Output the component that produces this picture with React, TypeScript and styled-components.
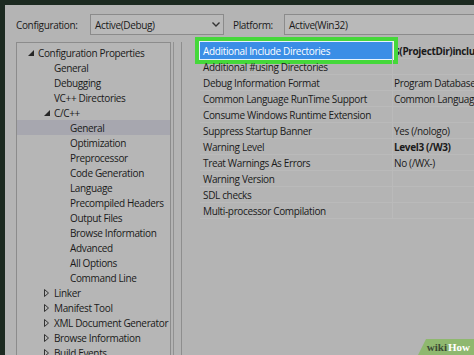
import React from "react";
import styled, { createGlobalStyle } from "styled-components";

const GlobalStyle = createGlobalStyle`
  body {
    margin: 0;
    font-family: "Open Sans", "Noto Sans", sans-serif;
  }
`;

interface TreeItem {
  label: string;
  level: number;
  arrow?: "open" | "closed";
  selected?: boolean;
}

const treeItems: TreeItem[] = [
  { label: "Configuration Properties", level: 0, arrow: "open" },
  { label: "General", level: 1 },
  { label: "Debugging", level: 1 },
  { label: "VC++ Directories", level: 1 },
  { label: "C/C++", level: 1, arrow: "open" },
  { label: "General", level: 2, selected: true },
  { label: "Optimization", level: 2 },
  { label: "Preprocessor", level: 2 },
  { label: "Code Generation", level: 2 },
  { label: "Language", level: 2 },
  { label: "Precompiled Headers", level: 2 },
  { label: "Output Files", level: 2 },
  { label: "Browse Information", level: 2 },
  { label: "Advanced", level: 2 },
  { label: "All Options", level: 2 },
  { label: "Command Line", level: 2 },
  { label: "Linker", level: 1, arrow: "closed" },
  { label: "Manifest Tool", level: 1, arrow: "closed" },
  { label: "XML Document Generator", level: 1, arrow: "closed" },
  { label: "Browse Information", level: 1, arrow: "closed" },
  { label: "Build Events", level: 1, arrow: "closed" },
];

const properties: { name: string; value?: string; bold?: boolean }[] = [
  { name: "Additional Include Directories", value: "$(ProjectDir)include", bold: true },
  { name: "Additional #using Directories" },
  { name: "Debug Information Format", value: "Program Database (/Zi)" },
  { name: "Common Language RunTime Support", value: "Common Language RunTime" },
  { name: "Consume Windows Runtime Extension" },
  { name: "Suppress Startup Banner", value: "Yes (/nologo)" },
  { name: "Warning Level", value: "Level3 (/W3)", bold: true },
  { name: "Treat Warnings As Errors", value: "No (/WX-)" },
  { name: "Warning Version" },
  { name: "SDL checks" },
  { name: "Multi-processor Compilation" },
];

function Arrow({ kind }: { kind?: "open" | "closed" }) {
  if (kind === "open") {
    return (
      <svg width="6" height="6" viewBox="0 0 6 6">
        <polygon points="6,0 6,6 0,6" fill="#262626" />
      </svg>
    );
  }
  if (kind === "closed") {
    return (
      <svg width="5" height="8" viewBox="0 0 5 8">
        <polygon points="0.5,0.5 4.5,4 0.5,7.5" fill="none" stroke="#333" strokeWidth="1" />
      </svg>
    );
  }
  return null;
}

function App() {
  return (
    <Frame>
      <GlobalStyle />
      <Window>
        <TopBar>
          <Label width={74}>Configuration:</Label>
          <Select width={134}>
            Active(Debug)
            <Chevron viewBox="0 0 8 5">
              <polyline points="0.5,0.5 4,4 7.5,0.5" fill="none" stroke="#333" strokeWidth="1.4" />
            </Chevron>
          </Select>
          <Label width={51}>Platform:</Label>
          <Select>Active(Win32)</Select>
        </TopBar>
        <Body>
          <Tree>
            {treeItems.map((item, i) => (
              <TreeRow key={i} level={item.level} selected={item.selected}>
                <ArrowSlot>
                  <Arrow kind={item.arrow} />
                </ArrowSlot>
                {item.label}
              </TreeRow>
            ))}
          </Tree>
          <Splitter />
          <PropPanel>
            <Grid>
              {properties.map((p, i) => (
                <PropRow key={i}>
                  <NameCell active={i === 0}>{p.name}</NameCell>
                  <ValueCell bold={p.bold}>{p.value}</ValueCell>
                </PropRow>
              ))}
            </Grid>
          </PropPanel>
        </Body>
        <Badge>
          <Wiki>wiki</Wiki>
          <How>How</How>
        </Badge>
      </Window>
    </Frame>
  );
}

const Frame = styled.div`
  width: 474px;
  height: 355px;
  box-sizing: border-box;
  padding: 5px 0 0 5px;
  background-color: #1c2a21;
  overflow: hidden;
`;

const Window = styled.div`
  position: relative;
  height: 100%;
  background-color: #b4b4b4;
  display: flex;
  flex-direction: column;
  font-size: 10px;
  font-weight: 500;
  letter-spacing: -0.35px;
  color: #1a1a1a;
  overflow: hidden;
`;

const TopBar = styled.div`
  display: flex;
  align-items: center;
  padding: 9px 0 0 11px;
  height: 21px;
`;

const Label = styled.span<{ width: number }>`
  width: ${(p) => p.width}px;
  white-space: nowrap;
`;

const Select = styled.div<{ width?: number }>`
  box-sizing: border-box;
  height: 21px;
  ${(p) => (p.width ? `width: ${p.width}px; margin-right: 9px;` : "flex: 1;")}
  border: 1px solid #8b8b8b;
  border-right: ${(p) => (p.width ? "1px solid #8b8b8b" : "none")};
  background-color: #b9b9b9;
  display: flex;
  align-items: center;
  padding-left: 4px;
  padding-right: 3px;
  white-space: nowrap;
`;

const Chevron = styled.svg`
  width: 8px;
  height: 5px;
  margin-left: auto;
`;

const Body = styled.div`
  flex: 1;
  display: flex;
  margin-top: 7px;
  margin-left: 11px;
  min-height: 0;
`;

const Tree = styled.div`
  width: 155px;
  box-sizing: border-box;
  border: 1px solid #8c8c8c;
  border-bottom: none;
  background-color: #b6b6b6;
  padding-top: 2px;
  overflow: hidden;
`;

const TreeRow = styled.div<{ level: number; selected?: boolean }>`
  height: 15px;
  display: flex;
  align-items: center;
  padding-left: ${(p) => 11 + p.level * 16}px;
  white-space: nowrap;
  background-color: ${(p) => (p.selected ? "#a7a7af" : "transparent")};
`;

const ArrowSlot = styled.span`
  width: 10px;
  display: flex;
  align-items: center;
`;

const Splitter = styled.div`
  width: 1px;
  margin-left: 2px;
  background-color: #919191;
`;

const PropPanel = styled.div`
  flex: 1;
  margin-left: 7px;
  border-left: 1px solid #8e8e8e;
  padding-left: 18px;
  padding-top: 1px;
`;

const Grid = styled.div`
  display: flex;
  flex-direction: column;
`;

const PropRow = styled.div`
  display: grid;
  grid-template-columns: 193px 1fr;
  height: 16px;
  border-bottom: 1px solid #bababa;
  box-sizing: border-box;
  white-space: nowrap;
`;

const NameCell = styled.div<{ active?: boolean }>`
  position: relative;
  z-index: 1;
  display: flex;
  align-items: center;
  padding-left: 3px;
  border-right: 1px solid #bababa;
  ${(p) =>
    p.active &&
    `
    background-color: #3a8ee6;
    color: #ffffff;
    height: 17px;
    margin-top: -1px;
    box-shadow: 0 0 0 1px #e6f3ff, 0 0 0 5px #45d83a;
  `}
`;

const ValueCell = styled.div<{ bold?: boolean }>`
  display: flex;
  align-items: center;
  padding-left: 1px;
  overflow: hidden;
  font-weight: ${(p) => (p.bold ? 700 : 500)};
`;

const Badge = styled.div`
  position: absolute;
  right: 0;
  bottom: 0;
  width: 56px;
  height: 16px;
  background-color: #8fb86f;
  clip-path: polygon(8px 0, 100% 0, 100% 100%, 0 100%);
  display: flex;
  align-items: center;
  justify-content: flex-end;
  padding-right: 4px;
  box-sizing: border-box;
  font-family: "Liberation Serif", "DejaVu Serif", serif;
  font-weight: 700;
  font-size: 11px;
  letter-spacing: 0;
`;

const Wiki = styled.span`
  color: #3b4a34;
`;

const How = styled.span`
  color: #ffffff;
  margin-left: 1px;
`;

export default App;
